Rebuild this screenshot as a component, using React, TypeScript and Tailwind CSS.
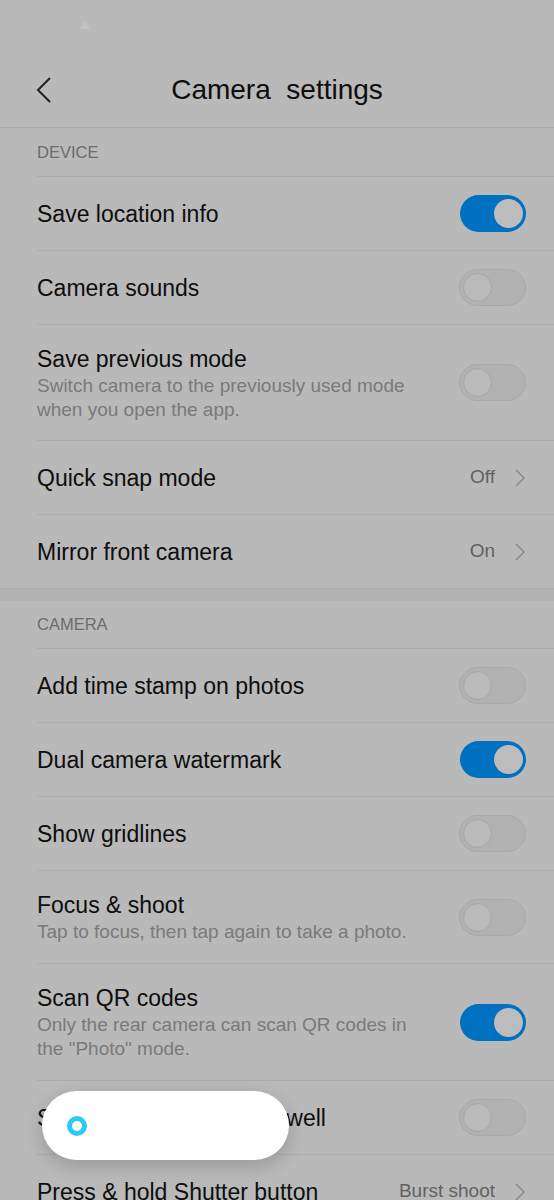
import React from 'react';

type Row = {
  title: string;
  sub?: string[];
  toggle?: boolean;
  value?: string;
  pad?: string;
};

const deviceRows: Row[] = [
  { title: 'Save location info', toggle: true },
  { title: 'Camera sounds', toggle: false },
  { title: 'Save previous mode', sub: ['Switch camera to the previously used mode', 'when you open the app.'], toggle: false, pad: 'py-[18.5px]' },
  { title: 'Quick snap mode', value: 'Off' },
  { title: 'Mirror front camera', value: 'On' },
];

const cameraRows: Row[] = [
  { title: 'Add time stamp on photos', toggle: false },
  { title: 'Dual camera watermark', toggle: true },
  { title: 'Show gridlines', toggle: false },
  { title: 'Focus & shoot', sub: ['Tap to focus, then tap again to take a photo.'], toggle: false, pad: 'py-[19px]' },
  { title: 'Scan QR codes', sub: ['Only the rear camera can scan QR codes in', 'the "Photo" mode.'], toggle: true, pad: 'py-[19px]' },
  { title: 'Scan business cards as well', toggle: false },
  { title: 'Press & hold Shutter button', value: 'Burst shoot' },
];

const Toggle: React.FC<{ on: boolean }> = ({ on }) =>
  on ? (
    <div className="w-[66px] h-[37px] rounded-full bg-[#0070c0] flex items-center justify-end pr-[3px] shrink-0">
      <div className="w-[29px] h-[29px] rounded-full bg-[#bcbcbc]" />
    </div>
  ) : (
    <div className="w-[67px] h-[37px] rounded-full bg-[#b2b2b2] border border-[#a9a9a9] flex items-center pl-[3px] shrink-0">
      <div className="w-[29px] h-[29px] rounded-full bg-[#bababa] border border-[#a6a6a6]" />
    </div>
  );

const Chevron = () => (
  <svg width="12" height="20" viewBox="0 0 12 20" className="shrink-0">
    <polyline points="2,2 10,10 2,18" fill="none" stroke="#8d8d8d" strokeWidth="1.6" />
  </svg>
);

const SettingRow: React.FC<{ row: Row; last?: boolean }> = ({ row, last }) => (
  <div className={last ? '' : 'ml-[37px] border-b border-[#adadad]'}>
    <div
      className={`flex items-center justify-between pr-[28px] min-h-[73px] ${row.pad ?? ''} ${last ? 'pl-[37px]' : ''}`}
    >
      <div className="flex flex-col">
        <div className="text-[23px] leading-[30px] text-[#0d0d0d]">{row.title}</div>
        {row.sub && (
          <div className="text-[19px] leading-[24px] text-[#7a7a7a]">
            {row.sub.map((s, i) => (
              <div key={i}>{s}</div>
            ))}
          </div>
        )}
      </div>
      {row.toggle !== undefined && <Toggle on={row.toggle} />}
      {row.value && (
        <div className="flex items-center gap-[19px]">
          <span className="text-[19px] text-[#626262]">{row.value}</span>
          <Chevron />
        </div>
      )}
    </div>
  </div>
);

const SectionHeader: React.FC<{ label: string; h: string }> = ({ label, h }) => (
  <div className={`${h} ml-[37px] border-b border-[#adadad] flex items-center`}>
    <span className="text-[16.5px] text-[#6c6c6c]">{label}</span>
  </div>
);

const App: React.FC = () => {
  return (
    <div
      className="relative w-full h-[1200px] overflow-hidden bg-[#b9b9b9]"
      style={{ fontFamily: '"Liberation Sans", Arial, sans-serif' }}
    >
      {/* status bar */}
      <div className="h-[50px] relative">
        <svg width="10" height="8" viewBox="0 0 10 8" className="absolute left-[80px] top-[21px] opacity-30">
          <polygon points="5,0 10,8 0,8" fill="#d8d8d8" />
        </svg>
      </div>

      {/* header */}
      <div className="h-[78px] border-b border-[#adadad] relative flex items-center justify-center pt-[2px]">
        <svg width="16" height="26" viewBox="0 0 16 26" className="absolute left-[36px] top-[27px]">
          <polyline points="14,1 2,13 14,25" fill="none" stroke="#222" strokeWidth="2" />
        </svg>
        <span className="text-[28px] text-[#0d0d0d] whitespace-pre">Camera  settings</span>
      </div>

      <SectionHeader label="DEVICE" h="h-[49px]" />
      {deviceRows.map((r, i) => (
        <SettingRow key={r.title} row={r} last={i === deviceRows.length - 1} />
      ))}
      <div className="h-px bg-[#adadad]" />
      <div className="h-[12px] bg-[#b2b2b2]" />

      <SectionHeader label="CAMERA" h="h-[48px]" />
      {cameraRows.map((r) => (
        <SettingRow key={r.title} row={r} />
      ))}

      {/* floating pill */}
      <div className="absolute left-[42px] top-[1091px] w-[247px] h-[69px] rounded-full bg-white shadow-[0_6px_18px_rgba(0,0,0,0.18)] flex items-center pl-[25px]">
        <div className="w-[20px] h-[20px] rounded-full border-[5px] border-[#2ccbf1]" />
      </div>
    </div>
  );
};

export default App;
